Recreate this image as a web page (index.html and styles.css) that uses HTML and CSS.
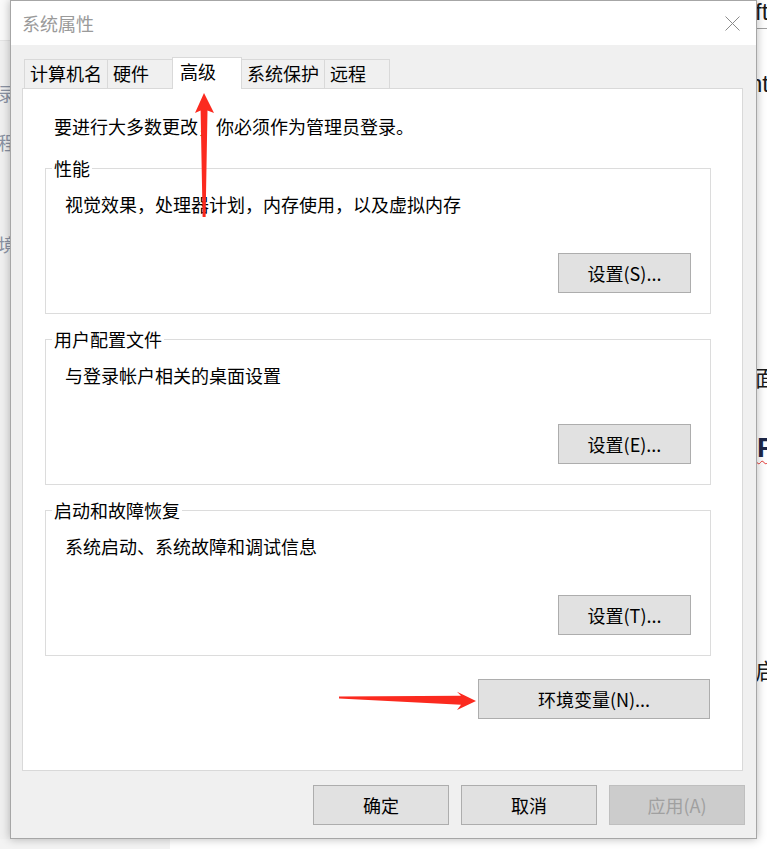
FILE: index.html
```html
<!DOCTYPE html>
<html lang="zh-CN">
<head>
    <meta charset="UTF-8">
    <meta name="viewport" content="width=device-width, initial-scale=1.0">
    <title>系统属性</title>
    <link rel="stylesheet" href="styles.css">
</head>
<body>

    <div class="desktop">

        <!-- Background window, left side -->
        <div class="strip strip-left">
            <div class="bg-char c1">录</div>
            <div class="bg-char c2">程</div>
            <div class="bg-char c3">境</div>
        </div>

        <!-- Dialog -->
        <div class="window">
            <div class="titlebar">
                <span class="title">系统属性</span>
                <svg class="close" width="15" height="15" viewBox="0 0 15 15">
                    <path d="M0.5 0.5 L14.5 14.5 M14.5 0.5 L0.5 14.5" stroke="#8a8a8a" stroke-width="1" fill="none"/>
                </svg>
            </div>

            <div class="window-body">
                <div class="tabs">
                    <div class="tab">计算机名</div>
                    <div class="tab">硬件</div>
                    <div class="tab active">高级</div>
                    <div class="tab">系统保护</div>
                    <div class="tab">远程</div>
                </div>

                <div class="panel">
                    <p class="intro">要进行大多数更改，你必须作为管理员登录。</p>

                    <div class="group">
                        <div class="group-title">性能</div>
                        <p class="group-desc">视觉效果，处理器计划，内存使用，以及虚拟内存</p>
                        <div class="group-actions">
                            <button class="btn btn-set">设置(S)...</button>
                        </div>
                    </div>

                    <div class="group">
                        <div class="group-title">用户配置文件</div>
                        <p class="group-desc">与登录帐户相关的桌面设置</p>
                        <div class="group-actions">
                            <button class="btn btn-set">设置(E)...</button>
                        </div>
                    </div>

                    <div class="group">
                        <div class="group-title">启动和故障恢复</div>
                        <p class="group-desc">系统启动、系统故障和调试信息</p>
                        <div class="group-actions">
                            <button class="btn btn-set">设置(T)...</button>
                        </div>
                    </div>

                    <div class="env-row">
                        <button class="btn btn-env">环境变量(N)...</button>
                    </div>
                </div>

                <div class="dialog-buttons">
                    <button class="btn btn-dlg">确定</button>
                    <button class="btn btn-dlg">取消</button>
                    <button class="btn btn-dlg" disabled>应用(A)</button>
                </div>
            </div>
        </div>

        <!-- Background document, right side -->
        <div class="strip strip-right">
            <div class="frag f1">ft</div>
            <div class="frag f2">nt</div>
            <div class="frag f3">面</div>
            <div class="frag f4">P</div>
            <div class="frag f5">启</div>
        </div>

        <div class="desk-bottom"></div>
    </div>

    <!-- Red annotation arrows -->
    <svg class="arrows" width="767" height="849" viewBox="0 0 767 849">
        <polygon fill="#fb2a1f" points="204,93 214,113 207.5,110.5 205.6,217 202.6,217 200.6,110.5 195,113"/>
        <polygon fill="#fb2a1f" points="339,696.6 461,695.8 457,691.8 476,701 457,710 461,704.8 339,698.6"/>
    </svg>

</body>
</html>
```

FILE: styles.css
```css
/* General Styles */
* {
    margin: 0;
    padding: 0;
    box-sizing: border-box;
}
body {
    position: relative;
    width: 767px;
    height: 849px;
    overflow: hidden;
    background: #fff;
    font-family: "Noto Sans CJK SC", "Noto Sans", sans-serif;
    font-size: 18px;
    line-height: 24px;
    color: #000;
}

/* Desktop */
.desktop {
    display: grid;
    grid-template-columns: 10px 747px 10px;
    grid-template-rows: 839px 10px;
}
.strip {
    overflow: hidden;
    white-space: nowrap;
}
.strip-left {
    background: linear-gradient(#fafafa 0 40px, #e4e4e4 40px 41px, #f0f0f0 41px);
}
.bg-char {
    color: #8a92a3;
    margin-left: -2px;
}
.c1 { margin-top: 81px; }
.c2 { margin-top: 25px; }
.c3 { margin-top: 78px; }

.strip-right {
    background: #fff;
}
.frag {
    font-family: "Liberation Sans", sans-serif;
    color: #1b1b1b;
    margin-left: -2px;
}
.f1 {
    font-size: 24px;
    line-height: 24px;
    padding-bottom: 4px;
    border-bottom: 1px solid #a0a0a0;
    margin-left: 0;
    text-indent: -2px;
}
.f2 {
    font-size: 24px;
    line-height: 24px;
    margin-top: 43px;
    margin-left: -8px;
}
.f3 {
    font-family: "Noto Sans CJK SC", sans-serif;
    font-size: 22px;
    line-height: 24px;
    margin-top: 268px;
}
.f4 {
    font-size: 28px;
    line-height: 28px;
    font-weight: bold;
    color: #1d2748;
    margin-top: 46px;
    margin-left: 0;
    text-decoration: underline wavy #e53935;
    text-decoration-thickness: 1px;
    text-underline-offset: 3px;
}
.f5 {
    font-family: "Noto Sans CJK SC", sans-serif;
    font-size: 22px;
    line-height: 24px;
    margin-top: 195px;
}
.desk-bottom {
    grid-column: 1 / 4;
    background: linear-gradient(to right, #f3f3f3 0 170px, #fff 170px);
}

/* Window */
.window {
    position: relative;
    z-index: 1;
    border: 1px solid #a6a6a6;
    background: #f0f0f0;
    box-shadow: 0 0 9px rgba(0, 0, 0, 0.28);
    display: flex;
    flex-direction: column;
}
.titlebar {
    height: 44px;
    background: #fff;
    display: flex;
    align-items: center;
    justify-content: space-between;
    padding: 0 16px 0 11px;
}
.title {
    color: #9a9a9a;
}
.close {
    display: block;
}
.window-body {
    flex: 1;
    padding: 12px 13px 13px 11px;
    display: flex;
    flex-direction: column;
}

/* Tabs */
.tabs {
    display: flex;
    align-items: flex-end;
    padding-left: 2px;
}
.tab {
    height: 29px;
    line-height: 26px;
    min-width: 66px;
    padding: 0 5px;
    border: 1px solid #d9d9d9;
    border-bottom: none;
    background: #f0f0f0;
    margin-left: -1px;
}
.tab:first-child {
    margin-left: 0;
}
.tab.active {
    position: relative;
    z-index: 1;
    height: 32px;
    min-width: 70px;
    padding-left: 7px;
    margin-bottom: -1px;
    background: #fff;
}

/* Panel */
.panel {
    background: #fff;
    border: 1px solid #d9d9d9;
    padding: 25px 31px 51px 22px;
}
.intro {
    margin-left: 9px;
}
.group {
    border: 1px solid #dcdcdc;
    margin-top: 25px;
    padding: 0 19px 20px 19px;
}
.intro + .group {
    margin-top: 30px;
}
.group-title {
    width: fit-content;
    background: #fff;
    padding: 0 2px;
    margin: -13px 0 0 -13px;
}
.group-desc {
    margin-top: 12px;
}
.group-actions {
    display: flex;
    justify-content: flex-end;
    margin-top: 37px;
}
.env-row {
    display: flex;
    justify-content: flex-end;
    margin-top: 23px;
    margin-right: 1px;
}

/* Buttons */
.btn {
    font-family: inherit;
    font-size: 18px;
    color: #000;
    background: #e1e1e1;
    border: 1px solid #adadad;
    height: 40px;
    display: flex;
    align-items: center;
    justify-content: center;
}
.btn-set {
    width: 133px;
}
.btn-env {
    width: 232px;
}
.dialog-buttons {
    display: flex;
    justify-content: flex-end;
    gap: 12px;
    margin-top: 14px;
    margin-right: -2px;
}
.btn-dlg {
    width: 136px;
}
.btn:disabled {
    background: #cccccc;
    border-color: #bfbfbf;
    color: #a0a0a0;
}

/* Arrows */
.arrows {
    position: absolute;
    top: 0;
    left: 0;
    z-index: 2;
    pointer-events: none;
}
```
